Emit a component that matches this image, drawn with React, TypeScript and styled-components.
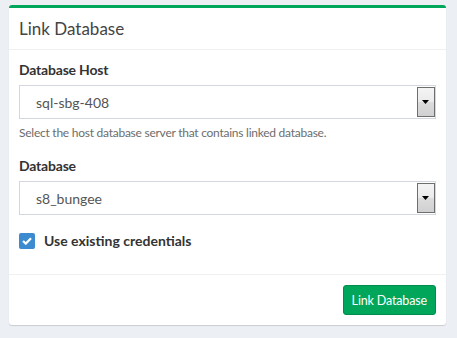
import React from "react";
import styled, { createGlobalStyle } from "styled-components";

const Global = createGlobalStyle`
  html, body { margin: 0; padding: 0; background: #ecf0f5; }
  body { font-family: "Source Sans Pro", Lato, "Liberation Sans", sans-serif; color: #333; font-size: 14px; }
  * { box-sizing: border-box; }
`;

const Page = styled.div`
  padding: 5px 11px 12px 9px;
  width: 457px;
  min-height: 338px;
`;

const Box = styled.div`
  background: #fff;
  border-top: 3px solid #00a65a;
  border-radius: 3px;
  box-shadow: 0 1px 1px rgba(0, 0, 0, 0.15);
`;

const Header = styled.div`
  padding: 10px 10px 9px 10px;
  border-bottom: 1px solid #f0f0f0;
`;

const Title = styled.h3`
  margin: 0;
  font-size: 17px;
  line-height: 22px;
  font-weight: 400;
  color: #444;
`;

const Body = styled.div`
  padding: 10px 10px 24px 10px;
`;

const Group = styled.div`
  margin-bottom: 15px;
`;

const Label = styled.label`
  display: block;
  font-weight: 700;
  line-height: 20px;
  margin-bottom: 5px;
  color: #333;
  letter-spacing: -0.2px;
`;

const Field = styled.div`
  display: flex;
  align-items: stretch;
  height: 34px;
  border: 1px solid #d2d6de;
  padding: 1px 0 1px 0;
  background: #fff;
`;

const Value = styled.div`
  flex: 1;
  padding: 0 16px;
  display: flex;
  align-items: center;
  color: #555;
  font-size: 14px;
`;

const ArrowBtn = styled.div`
  width: 18px;
  border: 1px solid #6e6e6e;
  background: linear-gradient(#f4f4f4 0%, #ebebeb 48%, #dcdcdc 52%, #d0d0d0 100%);
  display: flex;
  align-items: center;
  justify-content: center;
`;

const Help = styled.p`
  margin: 5px 0 0 0;
  font-size: 12px;
  line-height: 17px;
  color: #6d6d6d;
  letter-spacing: -0.25px;
`;

const CheckRow = styled.label`
  display: flex;
  align-items: center;
  gap: 9px;
  height: 20px;
  font-weight: 700;
  color: #333;
  padding-top: 1px;
`;

const CheckBox = styled.span`
  width: 16px;
  height: 16px;
  border-radius: 2px;
  background: #3c8ad0;
  display: flex;
  align-items: center;
  justify-content: center;
`;

const Footer = styled.div`
  border-top: 1px solid #f0f0f0;
  padding: 10px;
  display: flex;
  justify-content: flex-end;
`;

const Button = styled.button`
  font-family: inherit;
  font-size: 12.5px;
  height: 30px;
  padding: 0 8px;
  color: #fff;
  background: #00a65a;
  border: 1px solid #008d4c;
  border-radius: 3px;
  letter-spacing: -0.15px;
`;

function Select({ value }: { value: string }) {
  return (
    <Field>
      <Value>{value}</Value>
      <ArrowBtn>
        <svg width="8" height="5" viewBox="0 0 8 5">
          <path d="M0 0h7L3.5 4z" fill="#000" />
        </svg>
      </ArrowBtn>
    </Field>
  );
}

export default function App() {
  return (
    <Page>
      <Global />
      <Box>
        <Header>
          <Title>Link Database</Title>
        </Header>
        <Body>
          <Group>
            <Label>Database Host</Label>
            <Select value="sql-sbg-408" />
            <Help>Select the host database server that contains linked database.</Help>
          </Group>
          <Group>
            <Label>Database</Label>
            <Select value="s8_bungee" />
          </Group>
          <CheckRow>
            <CheckBox>
              <svg width="10" height="8" viewBox="0 0 10 8">
                <path d="M1 4l2.8 2.6L9 1.2" stroke="#fff" strokeWidth="2.2" fill="none" />
              </svg>
            </CheckBox>
            Use existing credentials
          </CheckRow>
        </Body>
        <Footer>
          <Button>Link Database</Button>
        </Footer>
      </Box>
    </Page>
  );
}
